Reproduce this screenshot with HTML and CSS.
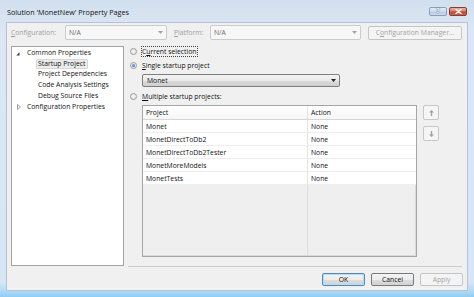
FILE: index.html
```html
<!DOCTYPE html>
<html lang="en">
<head>
<meta charset="utf-8">
<title>Solution 'MonetNew' Property Pages</title>
<link rel="stylesheet" href="styles.css">
</head>
<body>
<div class="window">
  <div class="titlebar">
    <span class="title">Solution 'MonetNew' Property Pages</span>
    <div class="caption">
      <span class="cap cap-help">?</span>
      <span class="cap cap-close"><svg width="7" height="5" viewBox="0 0 7 5"><path d="M1 0.5 L6 4.5 M6 0.5 L1 4.5" stroke="#fff" stroke-width="1.4" stroke-linecap="round"/></svg></span>
    </div>
  </div>
  <div class="client">
    <div class="toprow">
      <span class="lbl lbl-config"><u>C</u>onfiguration:</span>
      <div class="combo combo-dis combo-config"><span class="combo-text">N/A</span><svg class="combo-arrow" width="5" height="3" viewBox="0 0 5 3"><path d="M0 0 H5 L2.5 3 Z" fill="#a4a4a4"/></svg></div>
      <span class="lbl lbl-plat"><u>P</u>latform:</span>
      <div class="combo combo-dis combo-plat"><span class="combo-text">N/A</span><svg class="combo-arrow" width="5" height="3" viewBox="0 0 5 3"><path d="M0 0 H5 L2.5 3 Z" fill="#a4a4a4"/></svg></div>
      <button class="btn btn-dis btn-cm">C<u>o</u>nfiguration Manager...</button>
    </div>
    <div class="main">
      <div class="tree">
        <div class="node">
          <svg class="twisty" width="4" height="4" viewBox="0 0 4 4"><path d="M3.5 0.3 V3.5 H0.3 Z" fill="#3a3a3a"/></svg>
          <span class="item">Common Properties</span>
        </div>
        <div class="node child"><span class="item selected">Startup Project</span></div>
        <div class="node child"><span class="item">Project Dependencies</span></div>
        <div class="node child"><span class="item">Code Analysis Settings</span></div>
        <div class="node child"><span class="item">Debug Source Files</span></div>
        <div class="node">
          <svg class="twisty twisty-closed" width="4" height="6" viewBox="0 0 4 6"><path d="M0.5 0.5 L3.5 3 L0.5 5.5 Z" fill="#fff" stroke="#8c8c8c" stroke-width="0.8"/></svg>
          <span class="item">Configuration Properties</span>
        </div>
      </div>
      <div class="right">
        <div class="radio-row row-current">
          <span class="radio"></span>
          <span class="radio-label focus">C<u>u</u>rrent selection</span>
        </div>
        <div class="radio-row row-single">
          <span class="radio checked"></span>
          <span class="radio-label"><u>S</u>ingle startup project</span>
        </div>
        <div class="combo combo-monet"><span class="combo-text">Monet</span><svg class="combo-arrow" width="5" height="3" viewBox="0 0 5 3"><path d="M0 0 H5 L2.5 3 Z" fill="#222"/></svg></div>
        <div class="radio-row row-multi">
          <span class="radio"></span>
          <span class="radio-label"><u>M</u>ultiple startup projects:</span>
        </div>
        <div class="list-area">
          <div class="grid">
            <div class="grid-row grid-head"><span class="cell">Project</span><span class="cell">Action</span></div>
            <div class="grid-row"><span class="cell">Monet</span><span class="cell">None</span></div>
            <div class="grid-row"><span class="cell">MonetDirectToDb2</span><span class="cell">None</span></div>
            <div class="grid-row"><span class="cell">MonetDirectToDb2Tester</span><span class="cell">None</span></div>
            <div class="grid-row"><span class="cell">MonetMoreModels</span><span class="cell">None</span></div>
            <div class="grid-row"><span class="cell">MonetTests</span><span class="cell">None</span></div>
          </div>
          <div class="move-btns">
            <span class="move-btn"><svg width="5" height="6" viewBox="0 0 5 6"><path d="M2.5 0 L5 2.6 H3.2 V6 H1.8 V2.6 H0 Z" fill="#a2a2a2"/></svg></span>
            <span class="move-btn"><svg width="5" height="6" viewBox="0 0 5 6"><path d="M2.5 6 L5 3.4 H3.2 V0 H1.8 V3.4 H0 Z" fill="#a2a2a2"/></svg></span>
          </div>
        </div>
        <div class="separator"></div>
      </div>
    </div>
    <div class="bottom">
      <button class="btn btn-default">OK</button>
      <button class="btn">Cancel</button>
      <button class="btn btn-dis">Apply</button>
    </div>
  </div>
</div>
</body>
</html>
```

FILE: styles.css
```css
* {
  box-sizing: border-box;
  margin: 0;
  padding: 0;
}

html, body {
  width: 474px;
  height: 297px;
  overflow: hidden;
}

body {
  font-family: "Open Sans", "Noto Sans", sans-serif;
  font-size: 6.8px;
  color: #111;
  background: #d6e4f2;
}

u {
  text-decoration: underline;
  text-underline-offset: 0.5px;
}

.window {
  width: 474px;
  height: 297px;
  display: flex;
  flex-direction: column;
  padding: 0 6px 6px;
  background: linear-gradient(to bottom, #d2dfee 0, #dbe7f4 30px, #d7e6f4 282px, #b6dbf4 290px, #8ecdf2 297px);
}

/* Title bar */
.titlebar {
  height: 22px;
  display: flex;
  align-items: flex-start;
  padding-left: 1px;
}

.title {
  margin-top: 7px;
  line-height: 10px;
  font-size: 7.2px;
  color: #111;
}

.caption {
  margin-left: auto;
  margin-top: 7px;
  margin-right: 1px;
  display: flex;
  gap: 2px;
}

.cap {
  width: 18px;
  height: 9px;
  border-radius: 2px;
  display: flex;
  align-items: center;
  justify-content: center;
}

.cap-help {
  border: 1px solid #8aa1bd;
  background: linear-gradient(to bottom, #e6eef7 0, #cbd9ea 50%, #b7c9df 51%, #c9d8ea 100%);
  color: #f4f7fb;
  font-family: "DejaVu Sans", sans-serif;
  font-weight: bold;
  font-size: 7px;
  line-height: 7px;
  text-shadow: 0 0 1px #4d6484, 0 0 1px #4d6484;
}

.cap-close {
  border: 1px solid #8a3b2f;
  background: linear-gradient(to bottom, #eab1a3 0, #d9826d 45%, #c2432d 55%, #d4654c 100%);
}

/* Client area */
.client {
  flex: 1;
  display: flex;
  flex-direction: column;
  background: #f0f0f0;
  border: 1px solid #b4c4d6;
  padding: 2px 5px 4px 4px;
}

.toprow {
  height: 15px;
  display: flex;
  align-items: center;
}

.lbl {
  color: #a0a0a0;
  white-space: nowrap;
}

.lbl-config {
  width: 54px;
}

.lbl-plat {
  width: 36px;
  margin-left: 7px;
}

.combo {
  display: flex;
  align-items: center;
  border-radius: 2px;
  white-space: nowrap;
}

.combo-dis {
  height: 15px;
  border: 1px solid #c9cccf;
  background: #f7f7f7;
  padding-left: 3px;
  color: #6d6d6d;
}

.combo-config {
  width: 102px;
}

.combo-plat {
  width: 151px;
}

.combo-arrow {
  margin-left: auto;
  margin-right: 3px;
  flex: none;
}

.btn {
  font-family: inherit;
  font-size: inherit;
  color: #111;
  height: 13px;
  border: 1px solid #7a7a7a;
  border-radius: 2px;
  background: linear-gradient(to bottom, #f4f4f4 0, #ececec 50%, #dedede 51%, #d2d2d2 100%);
  white-space: nowrap;
  line-height: 11px;
}

.btn-dis {
  border-color: #c3c6c9;
  background: #f4f4f4;
  color: #a3a3a3;
}

.btn-cm {
  width: 94px;
  height: 14px;
  margin-left: 7px;
}

/* Main */
.main {
  margin-top: 6px;
  height: 221px;
  display: flex;
}

.tree {
  width: 113px;
  height: 220px;
  background: #fff;
  border: 1px solid #a3a3a3;
  padding: 0 0 0 4px;
  padding-top: 0.5px;
}

.node {
  height: 10.8px;
  display: flex;
  align-items: center;
  white-space: nowrap;
}

.twisty {
  flex: none;
  width: 4px;
  margin-right: 5px;
  position: relative;
  top: 1px;
}

.twisty-closed {
  margin-left: 1px;
  margin-right: 4px;
  top: 0;
}

.node.child {
  padding-left: 20px;
}

.item {
  border: 1px solid transparent;
  padding: 0 2px 0 1px;
  line-height: 8px;
  border-radius: 1px;
}

.item.selected {
  background: #ececec;
  border-color: #d6d6d6;
}

.right {
  flex: 1;
  margin-left: 6px;
  display: flex;
  flex-direction: column;
}

.radio-row {
  height: 11px;
  display: flex;
  align-items: center;
  white-space: nowrap;
}

.row-single {
  margin-top: 3px;
}

.row-multi {
  margin-top: 4px;
}

.radio {
  flex: none;
  width: 7px;
  height: 7px;
  border-radius: 50%;
  border: 1px solid #9b9b9b;
  background: radial-gradient(circle at 50% 50%, #f6f6f6 0, #e2e2e2 100%);
  margin-right: 4px;
  display: flex;
  align-items: center;
  justify-content: center;
}

.radio.checked::after {
  content: "";
  width: 3px;
  height: 3px;
  border-radius: 50%;
  background: radial-gradient(circle at 40% 35%, #7fb2ea 0, #1f5ea8 100%);
}

.radio-label {
  border: 1px dotted transparent;
  line-height: 9px;
  padding-right: 1px;
}

.radio-label.focus {
  border-color: #444;
}

.combo-monet {
  margin-top: 3px;
  margin-left: 12px;
  width: 198px;
  height: 13px;
  border: 1px solid #7e7e7e;
  background: linear-gradient(to bottom, #f3f3f3 0, #ebebeb 50%, #dcdcdc 51%, #cfcfcf 100%);
  padding-left: 4px;
}

.list-area {
  margin-top: 3px;
  display: flex;
  align-items: flex-start;
}

.grid {
  margin-left: 12px;
  width: 275px;
  height: 152px;
  border: 1px solid #a6a6a6;
  box-shadow: inset -1px -1px 0 #dadada;
  background: linear-gradient(to right, transparent 164px, #dedede 164px, #dedede 165px, transparent 165px), #efefef;
}

.grid-row {
  display: grid;
  grid-template-columns: 165px 1fr;
  height: 13px;
  background: #fff;
  border-bottom: 1px solid #eeeeee;
}

.grid-head {
  height: 14px;
  background: linear-gradient(to bottom, #ffffff 0, #f7f7f7 100%);
  border-bottom: 1px solid #d5d5d5;
}

.cell {
  display: flex;
  align-items: center;
  padding-left: 3px;
  white-space: nowrap;
}

.cell:first-child {
  border-right: 1px solid #e4e4e4;
  padding-left: 3px;
}

.move-btns {
  margin-left: 6px;
  display: flex;
  flex-direction: column;
  gap: 6px;
}

.move-btn {
  width: 16px;
  height: 15px;
  border: 1px solid #c6c6c6;
  border-radius: 2px;
  background: #f5f5f5;
  display: flex;
  align-items: center;
  justify-content: center;
}

.separator {
  margin-top: auto;
  margin-left: -2px;
  height: 1px;
  background: #cdcdcd;
}

/* Bottom buttons */
.bottom {
  margin-top: 6px;
  margin-right: -1px;
  display: flex;
  justify-content: flex-end;
  gap: 6px;
}

.bottom .btn {
  width: 43px;
}

.btn-default {
  border-color: #4a8bc2;
  box-shadow: inset 0 0 0 1px #b9dcf5;
}
```
